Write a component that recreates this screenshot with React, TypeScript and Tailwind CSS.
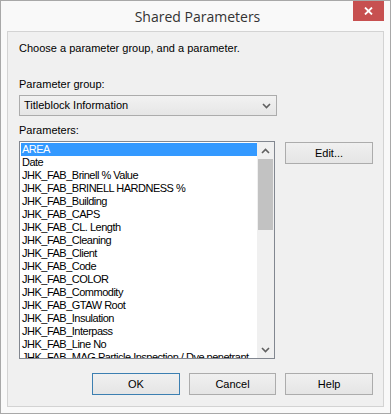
import React from 'react';

const params = [
  'AREA',
  'Date',
  'JHK_FAB_Brinell % Value',
  'JHK_FAB_BRINELL HARDNESS %',
  'JHK_FAB_Building',
  'JHK_FAB_CAPS',
  'JHK_FAB_CL. Length',
  'JHK_FAB_Cleaning',
  'JHK_FAB_Client',
  'JHK_FAB_Code',
  'JHK_FAB_COLOR',
  'JHK_FAB_Commodity',
  'JHK_FAB_GTAW Root',
  'JHK_FAB_Insulation',
  'JHK_FAB_Interpass',
  'JHK_FAB_Line No',
  'JHK_FAB_MAG Particle Inspection / Dye penetrant',
];

const Chevron = ({ up = false }: { up?: boolean }) => (
  <svg width="9" height="6" viewBox="0 0 9 6" className={up ? 'rotate-180' : ''}>
    <path d="M1 1 L4.5 4.5 L8 1" fill="none" stroke="#606060" strokeWidth="1.6" />
  </svg>
);

const Button = ({ label, primary = false }: { label: string; primary?: boolean }) => (
  <button
    className={`w-[88px] h-[22px] border bg-gradient-to-b from-[#f0f0f0] to-[#e5e5e5] text-[#000] ${
      primary ? 'border-[#3c7fb1]' : 'border-[#acacac]'
    }`}
  >
    {label}
  </button>
);

export default function App() {
  return (
    <div
      className="w-[391px] h-[414px] border border-[#a8a8a8] bg-[#f9f9f9] flex flex-col relative text-[11px] text-black"
      style={{ fontFamily: '"Liberation Sans", Arial, sans-serif' }}
    >
      {/* title bar */}
      <div className="h-[30px] flex items-center justify-center">
        <span
          className="text-[14px] text-[#333] pl-[4px]"
          style={{ fontFamily: '"Open Sans", "Noto Sans", sans-serif' }}
        >
          Shared Parameters
        </span>
      </div>
      <div className="absolute top-0 right-[6px] w-[31px] h-[20px] bg-[#c75050] flex items-center justify-center">
        <svg width="9" height="8" viewBox="0 0 9 8">
          <path d="M1 0.5 L8 7.5 M8 0.5 L1 7.5" stroke="#fff" strokeWidth="1.8" />
        </svg>
      </div>

      {/* client area */}
      <div className="flex-1 mx-[6px] mb-[6px] border border-[#d3d3d3] bg-[#f0f0f0] pl-[11px] pr-[10px] pt-[10px] flex flex-col">
        <div className="leading-[13px]">Choose a parameter group, and a parameter.</div>

        <div className="mt-[23px] leading-[13px]">Parameter group:</div>
        <div className="mt-[4px] w-[258px] h-[21px] border border-[#acacac] bg-gradient-to-b from-[#f2f2f2] to-[#e6e6e6] flex items-center pl-[4px] pr-[5px]">
          <span className="flex-1">Titleblock Information</span>
          <Chevron />
        </div>

        <div className="mt-[8px] leading-[13px]">Parameters:</div>
        <div className="mt-[4px] flex gap-[10px]">
          <div className="w-[256px] h-[218px] border border-[#828790] bg-white flex">
            <div className="flex-1 overflow-hidden pl-[1px] pt-[1px]">
              {params.map((p, i) => (
                <div
                  key={p}
                  className={`h-[13px] leading-[13px] pl-[1px] whitespace-nowrap tracking-[-0.5px] ${
                    i === 0 ? 'bg-[#3399ff] text-white' : ''
                  }`}
                >
                  {p}
                </div>
              ))}
            </div>
            <div className="w-[17px] bg-[#f0f0f0] flex flex-col">
              <div className="h-[17px] flex items-center justify-center">
                <Chevron up />
              </div>
              <div className="mx-[1px] h-[71px] bg-[#c2c2c2]" />
              <div className="flex-1" />
              <div className="h-[17px] flex items-center justify-center">
                <Chevron />
              </div>
            </div>
          </div>
          <div className="pt-[1px]">
            <Button label="Edit..." />
          </div>
        </div>

        <div className="mt-[14px] flex gap-[9px] pl-[73px]">
          <Button label="OK" primary />
          <Button label="Cancel" />
          <Button label="Help" />
        </div>
      </div>
    </div>
  );
}
